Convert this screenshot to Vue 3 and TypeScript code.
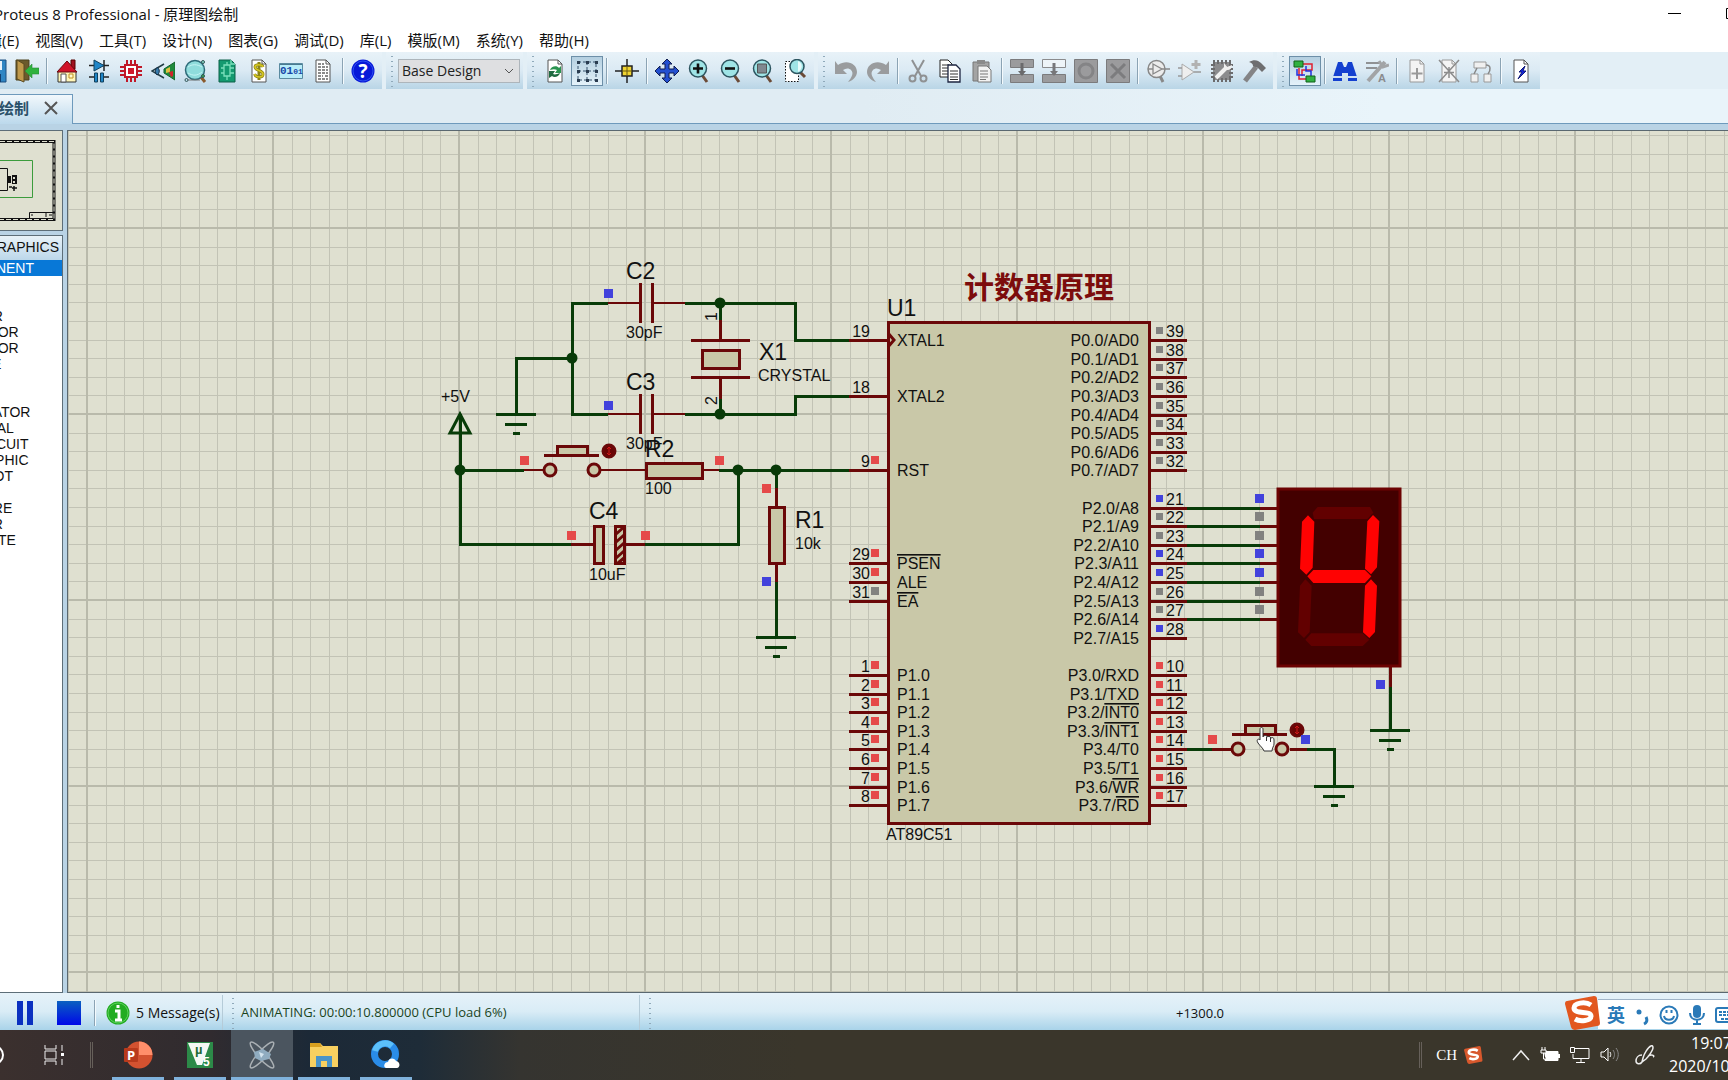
<script setup lang="ts">
type Tool = { icon: string; label: string; on?: boolean } | null

const menus = ['编辑(E)', '视图(V)', '工具(T)', '设计(N)', '图表(G)', '调试(D)', '库(L)', '模版(M)', '系统(Y)', '帮助(H)']

const page = '<path d="M5 1h10l4 4v18H5z" fill="#fff" stroke="#555"/><path d="M15 1v4h4" fill="none" stroke="#555"/>'
const greyPage = '<path d="M5 1h10l4 4v18H5z" fill="#f4f4f4" stroke="#999"/><path d="M15 1v4h4" fill="none" stroke="#999"/>'
const lens = '<path d="M15 16l5 7" stroke="#6b4a36" stroke-width="3"/><circle cx="11" cy="9.500" r="8.500" fill="#9fe4e6" stroke="#2d5560" stroke-width="1.500"/>'

const icons: Record<string, string> = {
  save: '<path d="M1 1h22v22H1z" fill="#2f86c4" stroke="#1c4f80"/><path d="M6 2h13v9H6z" fill="#e8f2fa"/><path d="M6 15h12v8H6z" fill="#123f70"/>',
  exit: '<path d="M1 1h13v20H1z" fill="#6a5a2c" stroke="#4a401c"/><path d="M2 1l7 4v18l-7-3z" fill="#c09a4c" stroke="#5a4a20"/><path d="M10 12l7-7v4h7v6h-7v4z" fill="#2fb23e" stroke="#2a8a38" stroke-width=".6"/>',
  home: '<path d="M16 1h4v9h-4z" fill="#a01020" stroke="#500"/><path d="M3 12h18v11H3z" fill="#fff6b8" stroke="#333"/><path d="M12 2L2 13h20z" fill="#d0142a" stroke="#6a0a10"/><path d="M6 15h5v8H6z" fill="#fff" stroke="#555"/><path d="M14 15h4v4h-4z" fill="#fff9d0" stroke="#c09020"/>',
  parts: '<path d="M2 6.500h20M17 1v11" stroke="#222" stroke-width="1.500"/><path d="M7 1v11l10-5.500z" fill="#2086c8" stroke="#10405c"/><path d="M2 18h6M16 18h6" stroke="#222" stroke-width="1.500"/><path d="M7.500 14h3v9h-3zM13.500 14h3v9h-3z" fill="#2086c8" stroke="#10405c"/>',
  chip: '<path d="M8 1v4M12 1v4M16 1v4M8 19v4M12 19v4M16 19v4M1 8h4M1 12h4M1 16h4M19 8h4M19 12h4M19 16h4" stroke="#c01828" stroke-width="2"/><path d="M6 6h12v12H6z" fill="#fff" stroke="#c01828" stroke-width="2"/><path d="M9 9h6v6H9z" fill="#d0182c"/>',
  view: '<path d="M13 5L1 12l12 7" fill="none" stroke="#223c44" stroke-width="1.500"/><path d="M6 8.500c3 1 3 6 0 7.500-2-2-2-5.500 0-7.500z" fill="#3a80b0" stroke="#102840"/><path d="M24 3v18L13 14v-4z" fill="#1f8a3c" stroke="#14602a"/><path d="M15 10l4-2v5l-4 1z" fill="#e0c040"/><path d="M18 13l4-1v5l-2 1z" fill="#d0242a"/>',
  globe: '<path d="M17 17l5 6" stroke="#8a5a2c" stroke-width="3"/><circle cx="12" cy="11" r="9.500" fill="#8fdcdc" stroke="#2d6a78" stroke-width="1.500"/><path d="M5 8c4-3 9-3 14 0M5 14c5 3 9 3 14-1" stroke="#c4f4f4" fill="none"/><path d="M3 21h14" stroke="#777"/><circle cx="3.500" cy="21" r="1.500" fill="#bde" stroke="#355"/><circle cx="20" cy="3" r="1.500" fill="#8dc" stroke="#355"/><circle cx="20" cy="17" r="1.500" fill="#3a5" stroke="#355"/>',
  pcb: '<path d="M4 1h12l4 4v18H4z" fill="#149a70" stroke="#0c6048"/><path d="M16 1v4h4M9 6h6v11H9zM6 9h3M15 9h4M6 14h3M15 14h4M12 6V3M12 17v4" fill="none" stroke="#7ce0bc" stroke-width="1.300"/>',
  cost: page + '<path d="M16 8c-1-3-8-3-8 0 0 4 8 3 8 7 0 4-7 4-8.500 0M12 3v18" fill="none" stroke="#8c8418" stroke-width="3"/><path d="M16 8c-1-3-8-3-8 0 0 4 8 3 8 7 0 4-7 4-8.500 0" fill="none" stroke="#d8c820" stroke-width="1.500"/>',
  bits: '<path d="M.5 4.500h23v15H.5z" fill="#b8ecf8" stroke="#5a8aa0"/><path d="M1 5.500h22" stroke="#4a7a90"/><text x="1" y="15" font-family="Liberation Mono" font-weight="700" font-size="11" fill="#1848a8">01<tspan font-size="8">01</tspan></text>',
  report: page + '<path d="M7 5h6M7 8h10M7 11h7M15 11h2M7 14h10M7 17h5M14 17h3M7 20h10" stroke="#666" stroke-width="1.300" stroke-dasharray="3 1"/>',
  help: '<circle cx="12" cy="12" r="11.500" fill="#0818d8"/><circle cx="12" cy="12" r="10" fill="none" stroke="#2c50f0"/><text x="12" y="19" text-anchor="middle" font-family="Open Sans" font-weight="700" font-size="19" fill="#fff">?</text>',
  refresh: page + '<path d="M7 11c1-4 7-5 9-2l2-2v7h-6l2-3c-2-1-4-1-7 0z" fill="#2a9450"/><path d="M17 14c-1 4-6 5-8 3l-3 2v-7h6l-2 3c2 1 4 0 7-1z" fill="#1f6a40"/>',
  grid: '<path d="M3 3h18v18H3zM3 12h18M12 3v18" fill="none" stroke="#35506a" stroke-dasharray="3 2"/><path d="M2 2h3v3H2zM11 2h3v3h-3zM20 2h3v3h-3zM2 11h3v3H2zM11 11h3v3h-3zM20 11h3v3h-3zM2 20h3v3H2zM11 20h3v3h-3zM20 20h3v3h-3z" fill="#2a3c50"/>',
  origin: '<path d="M12 0v24M0 12h24" stroke="#222" stroke-width="1.500"/><path d="M7 7h10v10H7z" fill="#f0d430" stroke="#222" stroke-width="1.500"/><path d="M12 7v10M7 12h10" stroke="#6a5a10"/>',
  move: '<path d="M12 0l5 5h-3v5h5V7l5 5-5 5v-3h-5v5h3l-5 5-5-5h3v-5H5v3l-5-5 5-5v3h5V5H7z" fill="#2450d0" stroke="#101c50"/>',
  zin: lens + '<path d="M6 9.500h10M11 4.500v10" stroke="#111" stroke-width="2.600"/>',
  zout: lens + '<path d="M6 9.500h10" stroke="#111" stroke-width="2.600"/>',
  zall: lens + '<path d="M6.500 5h9v9h-9z" fill="#808890" stroke="#555"/>',
  zarea: '<path d="M2.500 2.500h13v20h-13z" fill="#fff" stroke="#111" stroke-dasharray="1.500 1.500"/><path d="M17 13l5 5" stroke="#6b4a36" stroke-width="3"/><circle cx="14" cy="7.500" r="7" fill="#9fe4e6" stroke="#2d5560" stroke-width="1.500"/><path d="M15 2c5 2 5 8 0 11" fill="#e8fbfb"/>',
  undo: '<path d="M1 2l3 4c8-6 19-2 19 7 0 5-5 9-9 10 4-5 6-9 3-12-2-2-5-2-8 0l4 4H1z" fill="#9a9c9e"/>',
  redo: '<path d="M23 2l-3 4C12 0 1 4 1 13c0 5 5 9 9 10-4-5-6-9-3-12 2-2 5-2 8 0l-4 4h12z" fill="#9a9c9e"/>',
  cut: '<path d="M6 1l9 16M18 1L9 17" stroke="#8f9193" stroke-width="2"/><circle cx="6.500" cy="19.500" r="3" fill="none" stroke="#8f9193" stroke-width="2"/><circle cx="17.500" cy="19.500" r="3" fill="none" stroke="#8f9193" stroke-width="2"/>',
  copy: '<path d="M2 1h8l4 4v13H2z" fill="#fff" stroke="#222"/><path d="M4 6h7M4 9h7M4 12h7M4 15h6" stroke="#333"/><path d="M10 6h8l4 4v13H10z" fill="#fff" stroke="#1c2440" stroke-width="1.300"/><path d="M12 12h8M12 15h8M12 18h8M12 20.500h8" stroke="#333"/>',
  paste: '<path d="M3 3h16v19H3z" fill="#a4a4a4" stroke="#777"/><path d="M7 1h8v4H7z" fill="#8a8a8a"/><path d="M8 7h9l4 4v12H8z" fill="#f2f2f2" stroke="#777"/><path d="M10 12h8M10 15h8M10 18h8M10 20.500h6" stroke="#777"/>',
  bcopy: '<path d="M.5.500h23v8H.5zM.5 15.500h23v8H.5z" fill="#9b9b9d" stroke="#7b7b7d"/><path d="M12 4v9" stroke="#6a6a6c" stroke-width="3"/><path d="M8 12h8l-4 5z" fill="#6a6a6c"/>',
  bmove: '<path d="M.5.500h23v8H.5z" fill="#eef4f8" stroke="#8b8b8d"/><path d="M.5 15.500h23v8H.5z" fill="#9b9b9d" stroke="#7b7b7d"/><path d="M12 4v9" stroke="#77777a" stroke-width="3"/><path d="M8 12h8l-4 5z" fill="#77777a"/>',
  brot: '<path d="M.5.500h23v23H.5z" fill="#9b9b9d" stroke="#7b7b7d"/><circle cx="12" cy="12" r="7" fill="none" stroke="#848486" stroke-width="3"/>',
  bdel: '<path d="M.5.500h23v23H.5z" fill="#9b9b9d" stroke="#7b7b7d"/><path d="M5 5l14 14M19 5L5 19" stroke="#7c7c7e" stroke-width="3"/>',
  pick: '<path d="M13 15l4 8" stroke="#888" stroke-width="3"/><circle cx="10.500" cy="10" r="8.500" fill="#ececec" stroke="#888" stroke-width="1.500"/><path d="M2 10h5M16 10h8M7 5l9 5-9 5z" fill="none" stroke="#888" stroke-width="1.300"/>',
  make: '<path d="M4 5v16l12-8z" fill="#eee" stroke="#aaa"/><path d="M0 9h4M0 17h4M16 13h7" stroke="#999" stroke-width="1.500"/><path d="M18 1v9M13.500 5.500h9" stroke="#b2b2b2" stroke-width="3"/>',
  pack: '<path d="M3 3h18v18H3z" fill="#8b8b8d" stroke="#6b6b6d" stroke-width="4" stroke-dasharray="2 2"/><path d="M6 19L17 8" stroke="#f0f0f0" stroke-width="4"/><path d="M14 4l3 4 5-2c0 5-4 6-8 4z" fill="#f0f0f0"/>',
  decomp: '<path d="M14 8L3 22" stroke="#848486" stroke-width="5"/><path d="M7 3c5-3 9-2 12 1l5 5-4 4-4-4-5-2c0-2-1-3-4-4z" fill="#6e6e70"/>',
  wire: '<path d="M9 5h10v6H9v6M6 9v11h8" fill="none" stroke="#e02030" stroke-width="1.500"/><path d="M13 7v5h5v5M4 10v6h8" fill="none" stroke="#2030e0" stroke-width="1.500"/><path d="M1 2h9v6H1zM13 17h9v6h-9z" fill="#30b040" stroke="#106018"/>',
  find: '<path d="M5 3h4l2 5h2l2-5h4l5 15v4h-9v-8h-6v8H0v-4z" fill="#1440d0"/><path d="M0 18h9M15 18h9" stroke="#cfe0f4" stroke-width="2"/>',
  tag: '<path d="M1 4h13M1 9h11" stroke="#909294" stroke-width="2"/><path d="M20 3L3 22" stroke="#a2a4a6" stroke-width="4"/><path d="M14 2l4 6 6-2" fill="none" stroke="#a2a4a6" stroke-width="3"/><text x="13" y="23" font-family="Liberation Sans" font-weight="700" font-size="11" fill="#8a8c8e">A</text>',
  sadd: greyPage + '<path d="M12 9v11M6.500 14.500h11" stroke="#999" stroke-width="2"/>',
  sdel: greyPage + '<path d="M12 8v11M7 13.500h10M2 1l20 22M22 1L2 23" stroke="#8c8c8c" stroke-width="1.500"/>',
  tree: '<path d="M5 3h12v6H5zM2 15h7v8H2zM15 15h7v8h-7z" fill="#f0f0f0" stroke="#999"/><path d="M8 9l-3 6M17 6c5 0 5 5 2 9" fill="none" stroke="#888" stroke-width="1.500"/>',
  elec: page + '<path d="M16 7l-6 6h3l-4 7 8-8h-3z" fill="#1428e0" stroke="#101878"/>'
}

const t = (icon: string, label: string, on = false): Tool => ({ icon, label, on })
const fileTools: Tool[] = [t('save', 'Save'), t('exit', 'Close'), null, t('home', 'Home'), t('parts', 'Schematic'), t('chip', 'PCB'), t('view', '3D view'), t('globe', 'Gerber'), t('pcb', 'Design explorer'), t('cost', 'Bill of materials'), t('bits', 'Source code'), t('report', 'Notes'), null, t('help', 'Help')]
const groups: Tool[][] = [
  [t('refresh', 'Redraw'), t('grid', 'Grid', true), null, t('origin', 'Origin'), null, t('move', 'Pan'), t('zin', 'Zoom in'), t('zout', 'Zoom out'), t('zall', 'Zoom all'), t('zarea', 'Zoom area')],
  [t('undo', 'Undo'), t('redo', 'Redo'), null, t('cut', 'Cut'), t('copy', 'Copy'), t('paste', 'Paste'), null, t('bcopy', 'Block copy'), t('bmove', 'Block move'), t('brot', 'Block rotate'), t('bdel', 'Block delete'), null, t('pick', 'Pick'), t('make', 'Make device'), t('pack', 'Packaging'), t('decomp', 'Decompose')],
  [t('wire', 'Wire autorouter', true), null, t('find', 'Find'), t('tag', 'Property tool'), null, t('sadd', 'New sheet'), t('sdel', 'Remove sheet'), t('tree', 'Parent sheet'), null, t('elec', 'Electrical check')]
]

const styles = ['COMPONENT', '', '', 'MARKER', 'ACTUATOR', 'INDICATOR', 'VPROBE', '', '', 'GENERATOR', 'TERMINAL', 'SUBCIRCUIT', '2D GRAPHIC', 'WIRE DOT', '', 'BUS WIRE', 'BORDER', 'TEMPLATE']

// Schematic geometry: one grid step is 18.6 units, rows are counted from y = 303.
const row = (n: number) => Math.round(303 + 18.6 * n)
const steps = [1, 2, 3, 4, 5, 6, 7, 8, 9].map((i) => Math.round(i * 18.6))

type Level = 'hi' | 'lo' | 'float' | ''
interface Pin { num: number; name: string; bar?: string; y: number; level: Level }
const pin = (num: number, name: string, n: number, level: Level, bar = ''): Pin => ({ num, name, bar, y: row(n), level })

const leftPins: Pin[] = [
  pin(19, 'XTAL1', 2, ''), pin(18, 'XTAL2', 5, ''), pin(9, 'RST', 9, 'hi'),
  pin(29, '', 14, 'hi', 'PSEN'), pin(30, 'ALE', 15, 'hi'), pin(31, '', 16, 'float', 'EA'),
  ...[0, 1, 2, 3, 4, 5, 6, 7].map((i) => pin(i + 1, `P1.${i}`, 20 + i, 'hi'))
]
const bus: Level[] = ['lo', 'float', 'float', 'lo', 'lo', 'float', 'float', 'lo']
const p3 = [['RXD', ''], ['TXD', ''], ['', 'INT0'], ['', 'INT1'], ['T0', ''], ['T1', ''], ['', 'WR'], ['', 'RD']]
const rightPins: Pin[] = [
  ...[0, 1, 2, 3, 4, 5, 6, 7].map((i) => pin(39 - i, `P0.${i}/AD${i}`, 2 + i, 'float')),
  ...bus.map((s, i) => pin(21 + i, `P2.${i}/A${8 + i}`, 11 + i, s)),
  ...p3.map((p, i) => pin(10 + i, `P3.${i}/${p[0]}`, 20 + i, 'hi', p[1]))
]
const segPins = bus.slice(0, 7).map((level, i) => ({ level, y: row(11 + i) }))

const probes: { x: number; y: number; level: Level }[] = [
  { x: 608, y: 293, level: 'lo' }, { x: 608, y: 405, level: 'lo' }, { x: 524, y: 460, level: 'hi' },
  { x: 719, y: 460, level: 'hi' }, { x: 766, y: 488, level: 'hi' }, { x: 766, y: 581, level: 'lo' },
  { x: 571, y: 535, level: 'hi' }, { x: 645, y: 535, level: 'hi' }, { x: 1380, y: 684, level: 'lo' },
  { x: 1212, y: 739, level: 'hi' }, { x: 1305, y: 739, level: 'lo' }
]
const grounds = [{ x: 516, y: 414 }, { x: 776, y: 637 }, { x: 1390, y: 730 }, { x: 1334, y: 786 }]
const switches = [{ x: 550, y: 470 }, { x: 1238, y: 749 }]
const junctions = [{ x: 720, y: 303 }, { x: 720, y: 414 }, { x: 572, y: 358 }, { x: 460, y: 470 }, { x: 738, y: 470 }, { x: 776, y: 470 }]
const caps = [303, 414]
const names = [
  { x: 626, y: 279, s: 'C2' }, { x: 626, y: 390, s: 'C3' }, { x: 759, y: 360, s: 'X1' }, { x: 645, y: 457, s: 'R2' },
  { x: 589, y: 519, s: 'C4' }, { x: 795, y: 528, s: 'R1' }, { x: 887, y: 316, s: 'U1' }
]
const values = [
  { x: 626, y: 338, s: '30pF' }, { x: 626, y: 449, s: '30pF' }, { x: 758, y: 381, s: 'CRYSTAL' }, { x: 645, y: 494, s: '100' },
  { x: 589, y: 580, s: '10uF' }, { x: 795, y: 549, s: '10k' }, { x: 886, y: 840, s: 'AT89C51' }, { x: 441, y: 402, s: '+5V' }
]
</script>

<template>
  <div class="desk">
    <header class="title">
      <h1>Proteus 8 Professional - 原理图绘制</h1>
      <div class="wins">
        <button aria-label="Minimize"><svg width="14" height="12"><path d="M0 5.500h13" stroke="#000" /></svg></button>
        <button aria-label="Maximize"><svg width="12" height="12"><path d="M.5.500h10v10H.5z" fill="none" stroke="#000" /></svg></button>
      </div>
    </header>
    <nav class="menu"><button v-for="m in menus" :key="m">{{ m }}</button></nav>

    <div class="tools">
      <div class="group first">
        <template v-for="(b, i) in fileTools" :key="i">
          <button v-if="b" class="tool" :aria-label="b.label"><svg width="24" height="24" viewBox="0 0 24 24" v-html="icons[b.icon]" /></button>
          <i v-else class="sep" />
        </template>
      </div>
      <div class="group">
        <i class="grip" />
        <select aria-label="Design variant"><option>Base Design</option></select>
      </div>
      <div v-for="(g, k) in groups" :key="k" class="group">
        <i class="grip" />
        <template v-for="(b, i) in g" :key="i">
          <button v-if="b" class="tool" :class="{ on: b.on }" :aria-label="b.label"><svg width="24" height="24" viewBox="0 0 24 24" v-html="icons[b.icon]" /></button>
          <i v-else class="sep" />
        </template>
      </div>
    </div>

    <div class="tabs">
      <div class="tab">
        <span>原理图绘制</span>
        <button aria-label="Close tab"><svg width="14" height="14"><path d="M1 1l12 12M13 1L1 13" stroke="#555" stroke-width="2" /></svg></button>
      </div>
    </div>

    <main class="work">
      <aside class="side">
        <div class="thumb">
          <svg width="62" height="99">
            <path d="M0 10.500h54v78H0" fill="none" stroke="#111" stroke-width="3" />
            <path d="M0 10.500h54v78H0" fill="none" stroke="#dfe0d0" stroke-dasharray="5 2" />
            <path d="M0 29.500h32.500v37H0" fill="none" stroke="#3c9c3c" />
            <path d="M0 37.500h7.500v22H0" fill="none" stroke="#111" stroke-width="1" />
            <path d="M8 45h3v7H8zM12 44h5v9h-5z" fill="#111" />
            <path d="M13 46h2v2h-2zM13 50h2v2h-2z" fill="#dfe0d0" />
            <path d="M9 56h3M12 57h5M14 55v5" stroke="#111" stroke-width="1.500" />
            <path d="M29.500 87v-5.500h24M31 84h2M46 82v4M49 84h3" fill="none" stroke="#111" />
          </svg>
        </div>
        <div class="picker">
          <h2>2D GRAPHICS</h2>
          <ul>
            <li v-for="(s, i) in styles" :key="i" :class="{ sel: i === 0 }">{{ s }}</li>
          </ul>
        </div>
      </aside>

      <section class="sheet">
        <svg width="100%" height="100%">
          <defs>
            <pattern id="dots" x="86" y="227" width="186" height="186" patternUnits="userSpaceOnUse">
              <path v-for="s in steps" :key="s" :d="`M${s + 1}.500 0v186M0 ${s + 1}.500h186`" stroke="#c2c3b5" />
              <path d="M1 0v186M0 1h186" stroke="#b9baab" stroke-width="2" />
            </pattern>
          </defs>
          <g transform="translate(-68 -131)">
            <rect x="68" y="131" width="100%" height="100%" fill="url(#dots)" />

            <g class="net">
              <path d="M608 303H572V414H608M572 358H516V414" />
              <path d="M685 303H795V340H849M685 414H795V396H849" />
              <path d="M720 303V320M720 399V414" />
              <path d="M460 414V544H571M460 470H524M645 544H738V470M719 470H849M776 470V488M776 582V637" />
              <path class="soft" d="M450 433H470L460 414Z" />
              <path v-for="s in segPins" :key="s.y" :d="`M1186 ${s.y}H1260`" />
              <path d="M1390 687V730M1186 749H1212M1307 749H1334V786" />
              <path v-for="g in grounds" :key="g.x" :d="`M${g.x - 20} ${g.y}h40M${g.x - 11} ${g.y + 10}h22M${g.x - 3} ${g.y + 19}h7`" />
            </g>

            <g class="part">
              <path v-for="y in caps" :key="y" :d="`M608 ${y}H640M652 ${y}H685`" stroke-width="2" />
              <path v-for="y in caps" :key="-y" :d="`M640 ${y - 20}v40M652 ${y - 20}v40`" />
              <path d="M720 320V340M691 340H750M691 377H750M720 377V399" />
              <rect x="702" y="350" width="37" height="18" />
              <path d="M524 470H543M601 470H646M702 470H719" stroke-width="2" />
              <rect x="646" y="463" width="56" height="15" />
              <path d="M571 544H593M625 544H645M776 488V507M776 563V582" />
              <rect x="594" y="526" width="9" height="37" />
              <rect x="615" y="526" width="9" height="37" />
              <path class="soft" d="M615 535l9-8M615 543l9-8M615 551l9-8M615 559l9-8M618 563l6-5" />
              <rect x="769" y="507" width="15" height="56" />
              <g v-for="s in switches" :key="s.x">
                <rect :x="s.x + 7" :y="s.y - 24" width="30" height="9" />
                <path :d="`M${s.x - 6} ${s.y - 15}h55`" />
                <circle :cx="s.x" :cy="s.y" r="6" />
                <circle :cx="s.x + 44" :cy="s.y" r="6" />
                <circle :cx="s.x + 59" :cy="s.y - 19" r="6" class="knob" />
                <path :d="`M${s.x + 59} ${s.y - 23}v8m-2-2l2 2l2-2m-4-4l2-2l2 2`" class="arrow soft" />
              </g>
              <path d="M1212 749H1231M1290 749H1307M1390 667V687" />
              <path v-for="s in segPins" :key="s.y" :d="`M1260 ${s.y}H1277`" />
              <rect x="888" y="322" width="261" height="501" />
              <path class="soft" d="M888 333l6 7l-6 7" />
              <path v-for="p in leftPins" :key="p.num" :d="`M849 ${p.y}H887`" />
              <path v-for="p in rightPins" :key="p.num" :d="`M1150 ${p.y}H1187`" />
            </g>

            <circle v-for="j in junctions" :key="`${j.x}-${j.y}`" :cx="j.x" :cy="j.y" r="5.500" fill="#083a08" />

            <g>
              <rect x="1278" y="489" width="122" height="177" fill="#430000" stroke="#6c0202" stroke-width="3" />
              <g transform="translate(1140 470) scale(.33333)">
                <path fill="#620000" d="M518 128L533 111H690L700 128L682 147H522ZM496 328L515 347L509 486L492 504L474 487L480 347ZM496 509L514 490H668L688 509L668 528H514Z" />
                <path fill="#ff0202" d="M504 136L523 155L518 293L499 314L480 296L486 155ZM699 135L718 154L711 292L693 313L675 296L682 154ZM502 319L520 300H675L694 319L675 339H520ZM693 328L711 347L705 486L688 504L669 487L675 347Z" />
              </g>
            </g>

            <rect v-for="p in probes" :key="`${p.x}-${p.y}`" :x="p.x - 4" :y="p.y - 4" width="9" height="9" :class="p.level" />
            <rect v-for="s in segPins" :key="s.y" x="1255" :y="s.y - 14" width="9" height="9" :class="s.level" />

            <g class="val">
              <template v-for="p in leftPins" :key="p.num">
                <rect v-if="p.level" x="871" :y="p.y - 14" width="8" height="8" :class="p.level" />
                <text x="870" :y="p.y - 3" text-anchor="end">{{ p.num }}</text>
                <text x="897" :y="p.y + 6">{{ p.name }}<tspan class="bar">{{ p.bar }}</tspan></text>
              </template>
              <template v-for="p in rightPins" :key="p.num">
                <rect x="1156" :y="p.y - 13" width="7" height="7" :class="p.level" />
                <text x="1166" :y="p.y - 3">{{ p.num }}</text>
                <text x="1139" :y="p.y + 6" text-anchor="end">{{ p.name }}<tspan class="bar">{{ p.bar }}</tspan></text>
              </template>
              <text v-for="v in values" :key="`${v.s}${v.y}`" :x="v.x" :y="v.y">{{ v.s }}</text>
              <text transform="translate(717 321) rotate(-90)">1</text>
              <text transform="translate(717 405) rotate(-90)">2</text>
            </g>
            <text v-for="n in names" :key="n.s" class="name" :x="n.x" :y="n.y">{{ n.s }}</text>
            <text class="head" x="964" y="298">计数器原理</text>

            <path d="M1260 729c0-2 3-2 3 0v8c1-2 4-2 4 0c1-1 3-1 4 1c2-1 3 0 3 2v4c0 2-2 4-2 7h-8c-1-3-4-5-6-8c-2-3 0-5 2-3z" fill="#fff" stroke="#333" />
            <path d="M1266.500 737v4M1270.500 738v4" stroke="#333" />
          </g>
        </svg>
      </section>
    </main>

    <footer class="status">
      <div class="run">
        <button aria-label="Pause"><svg width="16" height="24"><path d="M0 0h6v24H0zM10 0h6v24h-6z" fill="#0a30c0" /></svg></button>
        <button aria-label="Stop"><svg width="24" height="24"><defs><linearGradient id="bl" x2="0" y2="1"><stop stop-color="#0a60c0" /><stop offset="1" stop-color="#0008e8" /></linearGradient></defs><path d="M0 0h24v24H0z" fill="url(#bl)" /></svg></button>
        <i class="sep" />
        <svg width="24" height="24"><circle cx="12" cy="12" r="11.500" fill="#22ac22" /><circle cx="12" cy="12" r="10" fill="none" stroke="#5cd05c" /><path d="M12 4v3M9 10h4v9M9 19h7" fill="none" stroke="#fff" stroke-width="3" /></svg>
        <span>5 Message(s)</span>
      </div>
      <i class="grip" />
      <div class="anim">ANIMATING: 00:00:10.800000 (CPU load 6%)</div>
      <i class="grip" />
      <div class="coord">+1300.0</div>
      <div class="ime">
        <svg class="sogou" width="38" height="36" viewBox="0 0 38 36"><path d="M4 6L31 1Q34 1 34 4L37 28Q37 31 34 31L12 35Q9 35 8 32L2 9Q2 6 4 6Z" fill="#e2571f" /><path d="M28 10C22 6 11 8 11 13C11 20 28 15 28 21C28 26 17 27 12 24" fill="none" stroke="#fff" stroke-width="5" /></svg>
        <b>英</b>
        <svg width="14" height="24"><circle cx="4" cy="9" r="2.500" fill="#2a7ab8" /><path d="M11 14c2 4 0 6-2 7" stroke="#2a7ab8" stroke-width="3" fill="none" /></svg>
        <svg width="20" height="20"><circle cx="10" cy="10" r="8.500" fill="none" stroke="#2a7ab8" stroke-width="2" /><path d="M5 11c1 5 9 5 10 0M7.500 5v3M12.500 5v3" fill="none" stroke="#2a7ab8" stroke-width="2" /></svg>
        <svg width="16" height="20"><rect x="4" y="0" width="8" height="13" rx="4" fill="#2a7ab8" /><path d="M1 8c0 9 14 9 14 0M8 15v4M4 19h8" fill="none" stroke="#2a7ab8" stroke-width="2" /></svg>
        <svg width="24" height="18"><rect x="1" y="2" width="22" height="14" rx="2" fill="none" stroke="#2a7ab8" stroke-width="2" /><path d="M4 6h16M4 9h16M6 13h12" stroke="#2a7ab8" stroke-width="2" stroke-dasharray="3 1" /></svg>
      </div>
    </footer>

    <div class="taskbar">
      <svg class="ring" width="24" height="24"><circle cx="12" cy="12" r="9" fill="none" stroke="#fff" stroke-width="2" /></svg>
      <svg class="view" width="20" height="20"><path d="M1 0v4h11V0M1 20v-4h11v4M1 6h11v8H1zM18 0v6M18 14v6" fill="none" stroke="#eee" /><path d="M17 8h3v3h-3z" fill="#fff" /></svg>
      <i class="bar2" />
      <button class="app" aria-label="PowerPoint">
        <svg width="30" height="30"><circle cx="16" cy="15" r="13.500" fill="#d35230" /><path d="M16 1.500A13.500 13.500 0 0 1 29.500 15H16z" fill="#ff8f6b" /><rect x="1" y="8" width="14" height="14" rx="1" fill="#b83a1c" /><text x="4" y="20" font-family="Open Sans" font-weight="700" font-size="13" fill="#fff">P</text></svg>
      </button>
      <button class="app" aria-label="Keil">
        <svg width="28" height="28"><path d="M1 1h26v26H1z" fill="#2c8a48" /><path d="M2 2h22l-8 22h-5z" fill="#f4f8f4" /><text x="9" y="13" font-family="Liberation Sans" font-weight="700" font-size="13" fill="#1e6a34">µ</text><text x="17" y="25" font-family="Liberation Sans" font-weight="700" font-size="12" fill="#fff">5</text></svg>
      </button>
      <button class="app now" aria-label="Proteus">
        <svg width="30" height="30"><g fill="none" stroke="#aab0b4" stroke-width="1.500"><ellipse cx="15" cy="15" rx="4" ry="17" transform="rotate(42 15 15)" /><ellipse cx="15" cy="15" rx="4" ry="17" transform="rotate(-42 15 15)" /></g><path d="M7 12l9-3 8 5-2 5-8 2-6-3z" fill="#90acc0" /><path d="M12 12l5 2-3 4" fill="#d4e4ee" /></svg>
      </button>
      <button class="app" aria-label="Explorer">
        <svg width="30" height="28"><path d="M1 2h10l3 3h15v21H1z" fill="#f8d060" /><path d="M1 2h10l2 4H1z" fill="#d8a020" /><path d="M7 26V15h16v11h-5v-6h-6v6z" fill="#4a94c8" /></svg>
      </button>
      <button class="app" aria-label="QQ Browser">
        <svg width="32" height="32"><circle cx="15" cy="15" r="10.500" fill="none" stroke="#2a8ce8" stroke-width="7" /><path d="M5 12a10.500 10.500 0 0 1 17-5" fill="none" stroke="#5cc0fa" stroke-width="6" /><path d="M16 29c-3-1-2-6 2-6 1-5 7-4 8-1 5 1 4 7 1 7z" fill="#fff" /></svg>
      </button>
      <div class="tray">
        <i class="bar2" />
        <span class="lang">CH</span>
        <svg width="20" height="20" viewBox="0 0 38 36"><path d="M4 6L31 1Q34 1 34 4L37 28Q37 31 34 31L12 35Q9 35 8 32L2 9Q2 6 4 6Z" fill="#d8582c" /><path d="M28 10C22 6 11 8 11 13C11 20 28 15 28 21C28 26 17 27 12 24" fill="none" stroke="#fff" stroke-width="5" /></svg>
        <svg class="up" width="18" height="12"><path d="M1 11l8-9 8 9" fill="none" stroke="#eee" stroke-width="1.500" /></svg>
        <svg width="20" height="16"><path d="M5 4.500h13v9H5z" fill="#fff" stroke="#fff" /><path d="M19 7v4" stroke="#fff" stroke-width="2" /><path d="M1 3h5v3H1zM2 0v3M5 0v3M3.500 6v6H6" fill="#3a352b" stroke="#fff" /></svg>
        <svg width="20" height="18"><path d="M4 2.500h15v10H3V8M11 13v3M6 16.500h9M.5 1.500h4v5h-4z" fill="none" stroke="#fff" /></svg>
        <svg width="20" height="18"><path d="M1 6h3l4-4v13l-4-4H1z" fill="none" stroke="#fff" /><path d="M10 6c1 2 1 3 0 5" fill="none" stroke="#fff" /><path d="M13 4c2 3 2 6 0 9M16 2c3 4 3 9 0 13" fill="none" stroke="#888" /></svg>
        <svg class="pen" width="20" height="20"><path d="M16 1c-3 1-7 8-8 12l-1 4 4-3c3-3 7-9 7-11s-1-3-2-2zM7 10c-4 0-6 3-6 6s4 4 6 1M13 11c5-2 7 0 5 1" fill="none" stroke="#eee" stroke-width="1.500" /></svg>
        <div class="clock"><time>19:07</time><span>2020/10</span></div>
      </div>
    </div>
  </div>
</template>

<style>
html, body { margin: 0; overflow: hidden; }
</style>

<style scoped>
.desk { display: flex; flex-direction: column; height: 100vh; overflow: hidden; background: #fff; color: #111; font: 15px/20px "Open Sans", "Noto Sans CJK SC", sans-serif; }
button { padding: 0; border: 0; background: none; color: inherit; font: inherit; white-space: nowrap; }
svg { display: block; flex: none; }
i { flex: none; }

.title { display: flex; align-items: center; justify-content: space-between; height: 28px; }
.title h1 { margin: 0 0 0 -6px; font-size: 15px; font-weight: 400; white-space: nowrap; }
.wins { display: flex; gap: 44px; margin-right: -10px; }
.menu { display: flex; align-items: center; gap: 16px; height: 24px; margin-left: -28px; }

.tools { display: flex; gap: 4px; height: 37px; background: #e3eff6; }
.group { display: flex; align-items: center; padding-right: 3px; background: linear-gradient(#e8f2f8, #dbeaf4 50%, #b9d5e6); }
.first { margin-left: -21px; }
.grip { width: 12px; height: 34px; background: radial-gradient(circle, #8fa9ba 1px, transparent 1px) 2px 0 / 8px 5px repeat-y; }
.sep { width: 8px; height: 26px; background: linear-gradient(90deg, transparent 3px, #8ba3b4 3px 4px, #f4fafd 4px 5px, transparent 5px); }
.tool { display: flex; align-items: center; justify-content: center; box-sizing: border-box; width: 32px; height: 30px; }
.tool.on { border: 1px solid #6d8fa8; background: linear-gradient(#b4cfe0, #e4f2fa); }
select { width: 122px; height: 24px; padding: 0 0 0 3px; border: 1px solid #adb5bb; border-radius: 0; color: #222; font: 14px/20px "Open Sans", sans-serif; appearance: none; background: #dedfe1 url("data:image/svg+xml,%3Csvg xmlns='http://www.w3.org/2000/svg' width='10' height='6'%3E%3Cpath d='M1 1l4 4 4-4' fill='none' stroke='%23555'/%3E%3C/svg%3E") no-repeat right 5px center; }

.tabs { display: flex; align-items: flex-end; height: 34px; border-bottom: 1px solid #6e9abc; background: linear-gradient(90deg, #e0ecf3 50%, #e9f4fa 80%); }
.tab { display: flex; align-items: center; gap: 15px; box-sizing: border-box; height: 30px; margin: 0 0 -1px -47px; padding: 0 14px 4px 0; border: 1px solid #6e9abc; border-bottom: 0; background: linear-gradient(#f2f8fc, #bcd9ec); color: #2a5068; font-weight: 700; white-space: nowrap; }

.work { display: flex; flex: 1; gap: 4px; min-height: 0; padding-top: 6px; background: #b9d3e5; }
.side { display: flex; flex-direction: column; gap: 4px; width: 63px; overflow: hidden; }
.thumb { border: 1px solid #5d6e78; border-left: 0; background: #dfe0d0; }
.picker { flex: 1; border: 1px solid #5d6e78; border-left: 0; background: #fff; font: 14px/16px "Liberation Sans", sans-serif; }
.picker h2 { height: 24px; margin: 0; padding-right: 3px; background: linear-gradient(#e8f2f8, #bcd7ea); font-size: 14px; font-weight: 400; line-height: 22px; direction: rtl; white-space: nowrap; }
.picker ul { margin: 0; padding: 0; list-style: none; }
.picker li { height: 16px; text-indent: -57px; white-space: nowrap; }
.picker .sel { background: #0878d7; color: #fff; }
.sheet { flex: 1; min-width: 0; border: 1px solid #5a6870; border-right: 0; background: #dfe0d0; overflow: hidden; }

.net { fill: none; stroke: #083c08; stroke-width: 3; }
.part { fill: none; stroke: #6a0808; stroke-width: 3; }
.net path, .part path, .part rect { shape-rendering: crispEdges; }
.net .soft, .part .soft { shape-rendering: auto; }
.part rect, .part circle { fill: #c9c8a8; }
.part .knob { fill: #6a0404; }
.part .arrow { stroke: #d01818; stroke-width: 1; }
.hi { fill: #e54a4a; }
.lo { fill: #4242dc; }
.float { fill: #828280; }
.val { font: 16px "Liberation Sans", sans-serif; fill: #111; }
.name { font: 23px "Liberation Sans", sans-serif; fill: #111; }
.head { font: 700 30px "Noto Sans CJK SC", sans-serif; fill: #7c0c0c; }
.bar { text-decoration: overline; text-decoration-thickness: 2px; }

.status { position: relative; display: flex; align-items: center; box-sizing: border-box; height: 37px; padding-top: 2px; background: linear-gradient(#e6f2f9, #d9ecf6 50%, #a9d3e9); font-size: 13px; white-space: nowrap; }
.run { display: flex; align-items: center; width: 223px; padding-left: 17px; box-sizing: border-box; border-right: 1px solid #b5cbd8; height: 100%; }
.run button + button { margin: 0 10px 0 24px; }
.run .sep { margin-right: 7px; }
.run span { margin-left: 6px; font-size: 14px; }
.status .grip { margin: 0 2px 0 4px; }
.anim { box-sizing: border-box; width: 399px; border-right: 1px solid #b5cbd8; color: #1a441c; line-height: 35px; }
.coord { margin-left: 518px; }
.ime { position: absolute; right: 0; top: 6px; display: flex; align-items: center; gap: 10px; box-sizing: border-box; width: 130px; height: 30px; padding-left: 9px; border-top: 1px solid #a0b4c8; background: #fff; }
.ime .sogou { position: absolute; left: -35px; top: -5px; }
.ime b { color: #2a7ab8; font-size: 18px; }

.taskbar { display: flex; height: 50px; align-items: center; background: linear-gradient(90deg, #3b302e, #302b2f 210px, #1c2937 310px, #1e2c38 420px, #353430 520px, #3a362b 800px); color: #fff; }
.ring { margin-left: -18px; }
.view { margin-left: 38px; }
.bar2 { width: 3px; height: 26px; margin: 0 14px 0 26px; border: 1px solid #66605a; border-width: 0 1px; box-sizing: border-box; }
.app { display: flex; align-items: center; justify-content: center; position: relative; width: 62px; height: 50px; }
.app::after { content: ""; position: absolute; left: 5px; right: 5px; bottom: 0; height: 3px; background: #80b2dc; }
.now { background: #4b555f; }
.now::after { left: 0; right: 0; }
.tray { display: flex; align-items: center; gap: 10px; margin-left: auto; }
.tray .bar2 { margin: 0 4px 0 0; }
.lang { margin-right: -4px; font: 15px/20px "Liberation Serif", serif; }
.tray .up { margin-left: 19px; }
.tray .pen { margin-left: 5px; }
.clock { width: 59px; margin-left: 4px; font-size: 16px; line-height: 23px; overflow: hidden; white-space: nowrap; }
.clock time { display: block; margin-left: 22px; }
</style>
